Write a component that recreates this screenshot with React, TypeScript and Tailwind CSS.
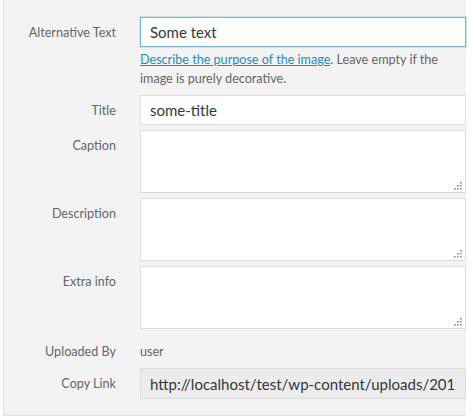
import React from 'react'

const font = { fontFamily: 'Lato, "Noto Sans", sans-serif' }

function Grip() {
  // dotted resize corner
  const dots = [
    [8, 0],
    [8, 3],
    [5, 3],
    [8, 6],
    [5, 6],
    [2, 6],
  ]
  return (
    <svg width="10" height="8" viewBox="0 0 10 8" className="pointer-events-none absolute bottom-[3px] right-[4px]">
      {dots.map(([x, y], i) => (
        <rect key={i} x={x} y={y} width="1.6" height="1.6" fill="#8c8f94" />
      ))}
    </svg>
  )
}

function Label({ children, className = '' }: { children: React.ReactNode; className?: string }) {
  return (
    <div className={`w-[112px] shrink-0 text-right text-[12.6px] leading-[19px] text-[#666] ${className}`}>{children}</div>
  )
}

function TextArea({ label }: { label: string }) {
  return (
    <div className="flex gap-6">
      <Label className="pt-[6px]">{label}</Label>
      <div className="relative flex-1">
        <textarea className="block h-[63px] w-full resize-none border border-[#dcdcde] bg-white outline-none" />
        <Grip />
      </div>
    </div>
  )
}

export default function App() {
  return (
    <div className="min-h-[420px] bg-white" style={font}>
      <div className="ml-[3px] w-[463px] border-b border-l border-[#e2e2e2] bg-[#f3f3f3] pb-[16px] pt-[17px]">
        <div className="flex flex-col gap-[5px]">
          <div className="flex gap-6">
            <Label className="pt-[6px]">Alternative Text</Label>
            <div className="flex-1">
              <input
                defaultValue="Some text"
                className="block h-[30px] w-full border border-[#7eb4d8] bg-white px-[9px] text-[15px] text-[#32373c] shadow-[0_0_0_1px_#cde3f2] outline-none"
              />
              <p className="mt-[3px] text-[12.6px] leading-[19px] text-[#666]">
                <a href="#" className="text-[#1e8cbe] underline">
                  Describe the purpose of the image
                </a>
                . Leave empty if the image is purely decorative.
              </p>
            </div>
          </div>

          <div className="mt-[2px] flex gap-6">
            <Label className="pt-[6px]">Title</Label>
            <input
              defaultValue="some-title"
              className="block h-[30px] flex-1 border border-[#e0e0e0] bg-white px-[9px] text-[15px] text-[#32373c] outline-none"
            />
          </div>

          <TextArea label="Caption" />
          <TextArea label="Description" />
          <TextArea label="Extra info" />

          <div className="mt-[8px] flex gap-6">
            <Label>Uploaded By</Label>
            <div className="text-[12.6px] leading-[19px] text-[#666]">user</div>
          </div>

          <div className="mt-[2px] flex gap-6">
            <Label className="pt-[6px]">Copy Link</Label>
            <input
              readOnly
              value="http://localhost/test/wp-content/uploads/2019/05/image.jpg"
              className="block h-[31px] min-w-0 flex-1 border border-[#dedede] bg-[#ececec] px-[9px] text-[15px] text-[#32373c] outline-none"
            />
          </div>
        </div>
      </div>
    </div>
  )
}
